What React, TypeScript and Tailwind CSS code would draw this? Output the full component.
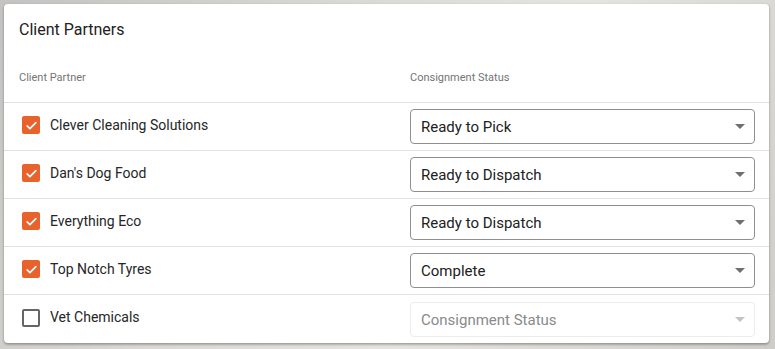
import React from 'react';

type Partner = {
  name: string;
  checked: boolean;
  status: string;
};

const partners: Partner[] = [
  { name: 'Clever Cleaning Solutions', checked: true, status: 'Ready to Pick' },
  { name: "Dan's Dog Food", checked: true, status: 'Ready to Dispatch' },
  { name: 'Everything Eco', checked: true, status: 'Ready to Dispatch' },
  { name: 'Top Notch Tyres', checked: true, status: 'Complete' },
  { name: 'Vet Chemicals', checked: false, status: '' },
];

const Checkbox: React.FC<{ checked: boolean }> = ({ checked }) =>
  checked ? (
    <span className="flex h-[18px] w-[18px] items-center justify-center rounded-[2px] bg-[#e8622c]">
      <svg viewBox="0 0 24 24" className="h-[15px] w-[15px]" fill="none" stroke="white" strokeWidth="2.6" strokeLinecap="round" strokeLinejoin="round">
        <path d="M5 12.5l4.5 4.5L19 7.5" />
      </svg>
    </span>
  ) : (
    <span className="block h-[18px] w-[18px] rounded-[2px] border-2 border-[#666666] bg-white" />
  );

const StatusSelect: React.FC<{ value: string }> = ({ value }) => {
  const disabled = !value;
  return (
    <div
      className={`flex h-[35px] w-full items-center justify-between rounded-[4px] border pl-[10px] pr-[9px] ${
        disabled ? 'border-[#ececec]' : 'border-[#8f8f8f]'
      }`}
    >
      <span className={`pt-[2px] text-[15px] ${disabled ? 'text-[#8a8a8a]' : 'text-[#212121]'}`}>
        {value || 'Consignment Status'}
      </span>
      <svg viewBox="0 0 10 5" className="h-[5px] w-[10px]">
        <path d="M0 0h10L5 5z" fill={disabled ? '#c4c4c4' : '#6f6f6f'} />
      </svg>
    </div>
  );
};

export default function App() {
  return (
    <div className="h-[349px] w-[775px] overflow-hidden bg-[linear-gradient(120deg,#c4c3c1_0%,#dad8d4_35%,#e6e4e0_60%,#cfcdc9_100%)] pt-1 pl-1 font-['Roboto',sans-serif]">
      <div className="w-[765px] overflow-hidden rounded-[4px] bg-white shadow-[0_1px_3px_rgba(0,0,0,0.25),0_2px_2px_rgba(0,0,0,0.12)]">
        <div className="flex h-[51px] items-center pl-[15px] text-[16px] text-[#212121]">Client Partners</div>
        <div className="flex h-[48px] items-center border-b border-[#e0e0e0] pl-[15px] pr-[14px] text-[11px] text-[#757575]">
          <span className="w-[391px]">Client Partner</span>
          <span>Consignment Status</span>
        </div>
        {partners.map((p, i) => (
          <div
            key={p.name}
            className={`flex h-[48px] items-center pl-[18px] pr-[14px] ${i < partners.length - 1 ? 'border-b border-[#e0e0e0]' : ''}`}
          >
            <div className="flex w-[388px] items-center gap-[10px] pb-[3px]">
              <Checkbox checked={p.checked} />
              <span className="text-[14px] text-[#262626]">{p.name}</span>
            </div>
            <div className="flex-1">
              <StatusSelect value={p.status} />
            </div>
          </div>
        ))}
      </div>
    </div>
  );
}
